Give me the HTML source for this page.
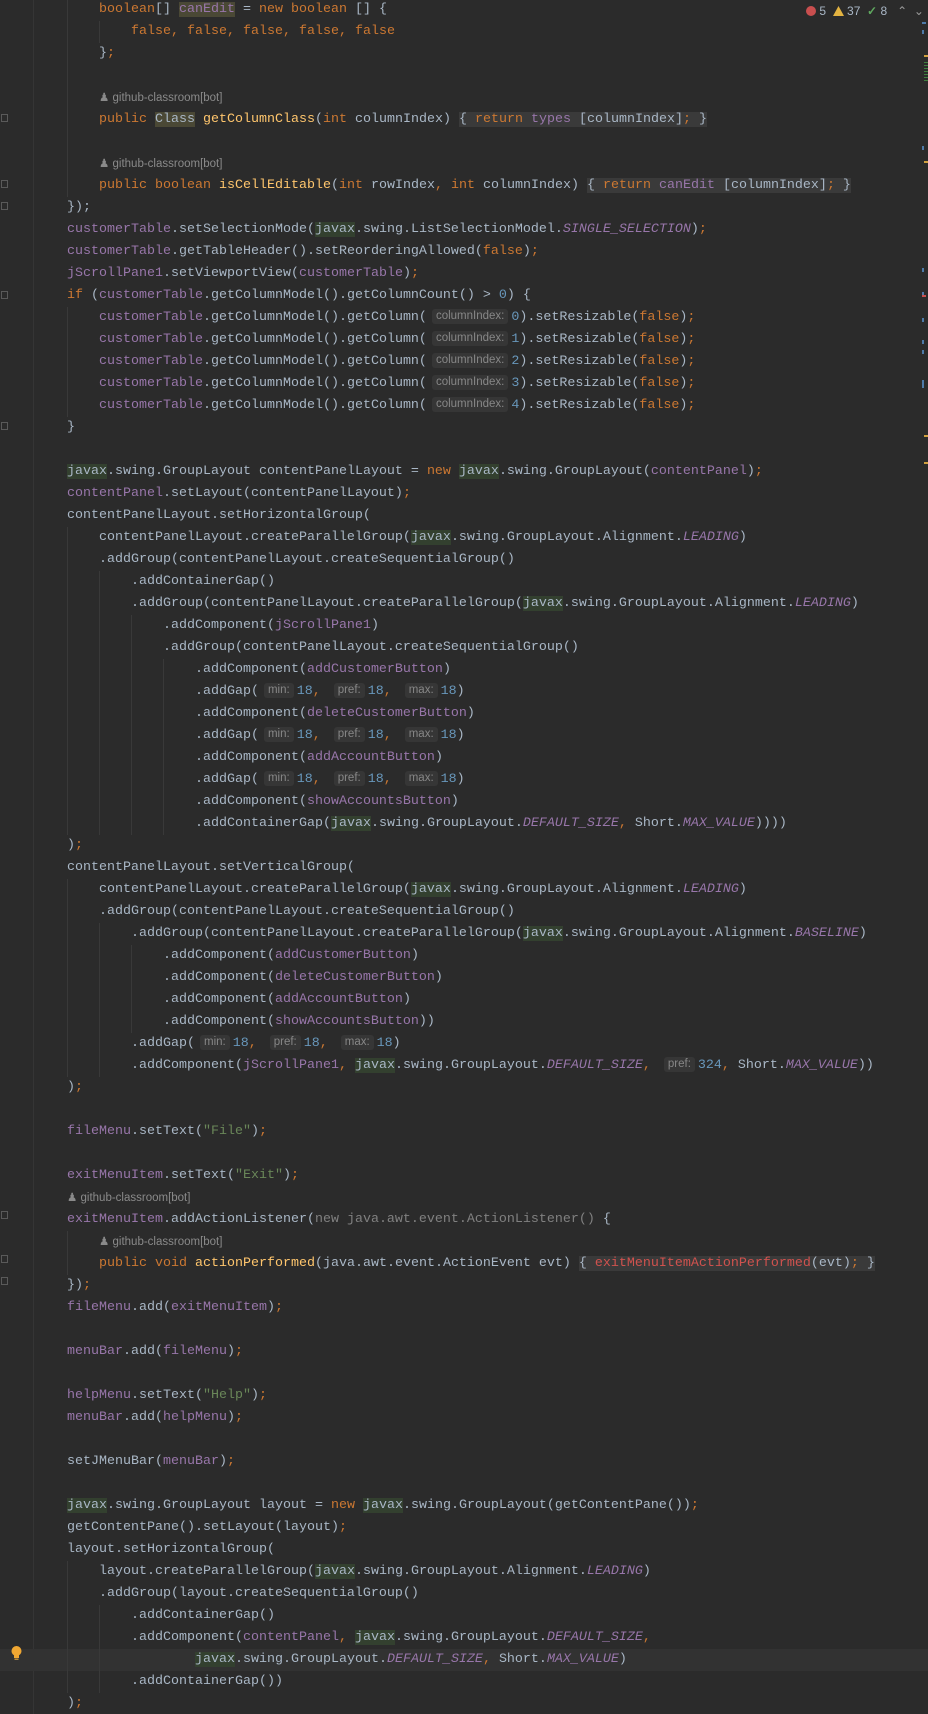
<!DOCTYPE html>
<html><head><meta charset="utf-8">
<style>
html,body{margin:0;padding:0;background:#2b2b2b;width:928px;height:1714px;overflow:hidden}
body{position:relative;font-family:"Liberation Mono",monospace;font-size:13.33px;color:#a9b7c6}
#code{position:absolute;top:-1px;left:0;width:928px}
.r{position:relative;height:22px;line-height:22px;white-space:pre;padding-left:67px;overflow:hidden}
.g{position:absolute;top:0;left:67px;height:22px;background:repeating-linear-gradient(to right,#393939 0 1px,transparent 1px 32px)}
.k{color:#cc7832}.f{color:#9876aa}.m{color:#ffc66d}.n{color:#6897bb}.s{color:#6a8759}
.c{color:#9876aa;font-style:italic}.d{color:#808080}.e{color:#d0524e}
.hl{background:#4a4835}.hj{background:#33402f}.fb{background:#3a3a3a}
.h{display:inline-block;font-family:"Liberation Sans",sans-serif;font-size:11.5px;line-height:15px;vertical-align:1px;color:#878787;background:#363636;border-radius:3px;padding:0 4px;margin:0 3px 0 5px}
.a{font-family:"Liberation Sans",sans-serif;font-size:11.5px;color:#8a8a8a}
.cur{background:#323232}
#gut{position:absolute;left:33px;top:0;width:1px;height:1714px;background:#353535}
.fold{position:absolute;left:1px;width:7px;height:8px;border:1px solid #5a5a5a;box-sizing:border-box}
</style></head><body>
<div id="gut"></div>
<div id="code">
<div class="r"><div class="g" style="width:32px"></div>    <span class="k">boolean</span>[] <span class="f hl">canEdit</span> = <span class="k">new boolean</span> [] {</div>
<div class="r"><div class="g" style="width:64px"></div>        <span class="k">false, false, false, false, false</span></div>
<div class="r"><div class="g" style="width:32px"></div>    }<span class="k">;</span></div>
<div class="r"><div class="g" style="width:32px"></div></div>
<div class="r"><div class="g" style="width:32px"></div>    <span class="a">&#9823; github-classroom[bot]</span></div>
<div class="r"><div class="g" style="width:32px"></div>    <span class="k">public </span><span class="hl">Class</span> <span class="m">getColumnClass</span>(<span class="k">int </span>columnIndex) <span class="fb">{ <span class="k">return </span><span class="f">types</span> [columnIndex]<span class="k">;</span> }</span></div>
<div class="r"><div class="g" style="width:32px"></div></div>
<div class="r"><div class="g" style="width:32px"></div>    <span class="a">&#9823; github-classroom[bot]</span></div>
<div class="r"><div class="g" style="width:32px"></div>    <span class="k">public boolean </span><span class="m">isCellEditable</span>(<span class="k">int </span>rowIndex<span class="k">, int </span>columnIndex) <span class="fb">{ <span class="k">return </span><span class="f">canEdit</span> [columnIndex]<span class="k">;</span> }</span></div>
<div class="r">});</div>
<div class="r"><span class="f">customerTable</span>.setSelectionMode(<span class="hj">javax</span>.swing.ListSelectionModel.<span class="c">SINGLE_SELECTION</span>)<span class="k">;</span></div>
<div class="r"><span class="f">customerTable</span>.getTableHeader().setReorderingAllowed(<span class="k">false</span>)<span class="k">;</span></div>
<div class="r"><span class="f">jScrollPane1</span>.setViewportView(<span class="f">customerTable</span>)<span class="k">;</span></div>
<div class="r"><span class="k">if </span>(<span class="f">customerTable</span>.getColumnModel().getColumnCount() &gt; <span class="n">0</span>) {</div>
<div class="r"><div class="g" style="width:32px"></div>    <span class="f">customerTable</span>.getColumnModel().getColumn(<span class="h">columnIndex:</span><span class="n">0</span>).setResizable(<span class="k">false</span>)<span class="k">;</span></div>
<div class="r"><div class="g" style="width:32px"></div>    <span class="f">customerTable</span>.getColumnModel().getColumn(<span class="h">columnIndex:</span><span class="n">1</span>).setResizable(<span class="k">false</span>)<span class="k">;</span></div>
<div class="r"><div class="g" style="width:32px"></div>    <span class="f">customerTable</span>.getColumnModel().getColumn(<span class="h">columnIndex:</span><span class="n">2</span>).setResizable(<span class="k">false</span>)<span class="k">;</span></div>
<div class="r"><div class="g" style="width:32px"></div>    <span class="f">customerTable</span>.getColumnModel().getColumn(<span class="h">columnIndex:</span><span class="n">3</span>).setResizable(<span class="k">false</span>)<span class="k">;</span></div>
<div class="r"><div class="g" style="width:32px"></div>    <span class="f">customerTable</span>.getColumnModel().getColumn(<span class="h">columnIndex:</span><span class="n">4</span>).setResizable(<span class="k">false</span>)<span class="k">;</span></div>
<div class="r">}</div>
<div class="r"></div>
<div class="r"><span class="hj">javax</span>.swing.GroupLayout contentPanelLayout = <span class="k">new </span><span class="hj">javax</span>.swing.GroupLayout(<span class="f">contentPanel</span>)<span class="k">;</span></div>
<div class="r"><span class="f">contentPanel</span>.setLayout(contentPanelLayout)<span class="k">;</span></div>
<div class="r">contentPanelLayout.setHorizontalGroup(</div>
<div class="r"><div class="g" style="width:32px"></div>    contentPanelLayout.createParallelGroup(<span class="hj">javax</span>.swing.GroupLayout.Alignment.<span class="c">LEADING</span>)</div>
<div class="r"><div class="g" style="width:32px"></div>    .addGroup(contentPanelLayout.createSequentialGroup()</div>
<div class="r"><div class="g" style="width:64px"></div>        .addContainerGap()</div>
<div class="r"><div class="g" style="width:64px"></div>        .addGroup(contentPanelLayout.createParallelGroup(<span class="hj">javax</span>.swing.GroupLayout.Alignment.<span class="c">LEADING</span>)</div>
<div class="r"><div class="g" style="width:96px"></div>            .addComponent(<span class="f">jScrollPane1</span>)</div>
<div class="r"><div class="g" style="width:96px"></div>            .addGroup(contentPanelLayout.createSequentialGroup()</div>
<div class="r"><div class="g" style="width:128px"></div>                .addComponent(<span class="f">addCustomerButton</span>)</div>
<div class="r"><div class="g" style="width:128px"></div>                .addGap(<span class="h">min:</span><span class="n">18</span><span class="k">, </span><span class="h">pref:</span><span class="n">18</span><span class="k">, </span><span class="h">max:</span><span class="n">18</span>)</div>
<div class="r"><div class="g" style="width:128px"></div>                .addComponent(<span class="f">deleteCustomerButton</span>)</div>
<div class="r"><div class="g" style="width:128px"></div>                .addGap(<span class="h">min:</span><span class="n">18</span><span class="k">, </span><span class="h">pref:</span><span class="n">18</span><span class="k">, </span><span class="h">max:</span><span class="n">18</span>)</div>
<div class="r"><div class="g" style="width:128px"></div>                .addComponent(<span class="f">addAccountButton</span>)</div>
<div class="r"><div class="g" style="width:128px"></div>                .addGap(<span class="h">min:</span><span class="n">18</span><span class="k">, </span><span class="h">pref:</span><span class="n">18</span><span class="k">, </span><span class="h">max:</span><span class="n">18</span>)</div>
<div class="r"><div class="g" style="width:128px"></div>                .addComponent(<span class="f">showAccountsButton</span>)</div>
<div class="r"><div class="g" style="width:128px"></div>                .addContainerGap(<span class="hj">javax</span>.swing.GroupLayout.<span class="c">DEFAULT_SIZE</span><span class="k">, </span>Short.<span class="c">MAX_VALUE</span>))))</div>
<div class="r">)<span class="k">;</span></div>
<div class="r">contentPanelLayout.setVerticalGroup(</div>
<div class="r"><div class="g" style="width:32px"></div>    contentPanelLayout.createParallelGroup(<span class="hj">javax</span>.swing.GroupLayout.Alignment.<span class="c">LEADING</span>)</div>
<div class="r"><div class="g" style="width:32px"></div>    .addGroup(contentPanelLayout.createSequentialGroup()</div>
<div class="r"><div class="g" style="width:64px"></div>        .addGroup(contentPanelLayout.createParallelGroup(<span class="hj">javax</span>.swing.GroupLayout.Alignment.<span class="c">BASELINE</span>)</div>
<div class="r"><div class="g" style="width:96px"></div>            .addComponent(<span class="f">addCustomerButton</span>)</div>
<div class="r"><div class="g" style="width:96px"></div>            .addComponent(<span class="f">deleteCustomerButton</span>)</div>
<div class="r"><div class="g" style="width:96px"></div>            .addComponent(<span class="f">addAccountButton</span>)</div>
<div class="r"><div class="g" style="width:96px"></div>            .addComponent(<span class="f">showAccountsButton</span>))</div>
<div class="r"><div class="g" style="width:64px"></div>        .addGap(<span class="h">min:</span><span class="n">18</span><span class="k">, </span><span class="h">pref:</span><span class="n">18</span><span class="k">, </span><span class="h">max:</span><span class="n">18</span>)</div>
<div class="r"><div class="g" style="width:64px"></div>        .addComponent(<span class="f">jScrollPane1</span><span class="k">, </span><span class="hj">javax</span>.swing.GroupLayout.<span class="c">DEFAULT_SIZE</span><span class="k">, </span><span class="h">pref:</span><span class="n">324</span><span class="k">, </span>Short.<span class="c">MAX_VALUE</span>))</div>
<div class="r">)<span class="k">;</span></div>
<div class="r"></div>
<div class="r"><span class="f">fileMenu</span>.setText(<span class="s">"File"</span>)<span class="k">;</span></div>
<div class="r"></div>
<div class="r"><span class="f">exitMenuItem</span>.setText(<span class="s">"Exit"</span>)<span class="k">;</span></div>
<div class="r"><span class="a">&#9823; github-classroom[bot]</span></div>
<div class="r"><span class="f">exitMenuItem</span>.addActionListener(<span class="d">new java.awt.event.ActionListener()</span> {</div>
<div class="r"><div class="g" style="width:32px"></div>    <span class="a">&#9823; github-classroom[bot]</span></div>
<div class="r"><div class="g" style="width:32px"></div>    <span class="k">public void </span><span class="m">actionPerformed</span>(java.awt.event.ActionEvent evt) <span class="fb">{ <span class="e">exitMenuItemActionPerformed</span>(evt)<span class="k">;</span> }</span></div>
<div class="r">})<span class="k">;</span></div>
<div class="r"><span class="f">fileMenu</span>.add(<span class="f">exitMenuItem</span>)<span class="k">;</span></div>
<div class="r"></div>
<div class="r"><span class="f">menuBar</span>.add(<span class="f">fileMenu</span>)<span class="k">;</span></div>
<div class="r"></div>
<div class="r"><span class="f">helpMenu</span>.setText(<span class="s">"Help"</span>)<span class="k">;</span></div>
<div class="r"><span class="f">menuBar</span>.add(<span class="f">helpMenu</span>)<span class="k">;</span></div>
<div class="r"></div>
<div class="r">setJMenuBar(<span class="f">menuBar</span>)<span class="k">;</span></div>
<div class="r"></div>
<div class="r"><span class="hj">javax</span>.swing.GroupLayout layout = <span class="k">new </span><span class="hj">javax</span>.swing.GroupLayout(getContentPane())<span class="k">;</span></div>
<div class="r">getContentPane().setLayout(layout)<span class="k">;</span></div>
<div class="r">layout.setHorizontalGroup(</div>
<div class="r"><div class="g" style="width:32px"></div>    layout.createParallelGroup(<span class="hj">javax</span>.swing.GroupLayout.Alignment.<span class="c">LEADING</span>)</div>
<div class="r"><div class="g" style="width:32px"></div>    .addGroup(layout.createSequentialGroup()</div>
<div class="r"><div class="g" style="width:64px"></div>        .addContainerGap()</div>
<div class="r"><div class="g" style="width:64px"></div>        .addComponent(<span class="f">contentPanel</span><span class="k">, </span><span class="hj">javax</span>.swing.GroupLayout.<span class="c">DEFAULT_SIZE</span><span class="k">,</span></div>
<div class="r cur"><div class="g" style="width:64px"></div>                <span class="hj">javax</span>.swing.GroupLayout.<span class="c">DEFAULT_SIZE</span><span class="k">, </span>Short.<span class="c">MAX_VALUE</span>)</div>
<div class="r"><div class="g" style="width:64px"></div>        .addContainerGap())</div>
<div class="r">)<span class="k">;</span></div>
</div>
<div class="fold" style="top:114px"></div>
<div class="fold" style="top:180px"></div>
<div class="fold" style="top:202px"></div>
<div class="fold" style="top:291px"></div>
<div class="fold" style="top:422px"></div>
<div class="fold" style="top:1211px"></div>
<div class="fold" style="top:1255px"></div>
<div class="fold" style="top:1277px"></div>
<svg style="position:absolute;left:10px;top:1645px" width="13" height="16" viewBox="0 0 13 16"><circle cx="6.5" cy="6" r="5" fill="#f0a732"/><rect x="4" y="10" width="5" height="3" fill="#f0a732"/><rect x="4.5" y="13.5" width="4" height="1.5" fill="#b88a3a"/></svg>
<div style="position:absolute;top:3px;left:806px;font-family:'Liberation Sans',sans-serif;font-size:12px;color:#a9b7c6;white-space:nowrap;line-height:16px">
<span style="display:inline-block;width:10px;height:10px;border-radius:50%;background:#c94f4f;vertical-align:-1px"></span> 5&nbsp;
<svg width="11" height="10" style="vertical-align:-1px"><polygon points="5.5,0 11,10 0,10" fill="#e3b341"/></svg> 37&nbsp;
<span style="color:#5fa85f;font-weight:bold">&#10003;</span> 8&nbsp;&nbsp; <span style="color:#9a9a9a">&#8963;</span>&nbsp;&nbsp;<span style="color:#9a9a9a">&#8964;</span>
</div>
<div style="position:absolute;left:922px;top:22px;width:4px;height:2px;background:#4e7aa8"></div>
<div style="position:absolute;left:922px;top:30px;width:2px;height:4px;background:#4e7aa8"></div>
<div style="position:absolute;left:924px;top:55px;width:4px;height:2px;background:#d0a040"></div>
<div style="position:absolute;left:924px;top:62px;width:4px;height:20px;background:repeating-linear-gradient(#3f7f3f 0 1px,transparent 1px 3px)"></div>
<div style="position:absolute;left:922px;top:146px;width:2px;height:4px;background:#4e7aa8"></div>
<div style="position:absolute;left:924px;top:161px;width:4px;height:2px;background:#d0a040"></div>
<div style="position:absolute;left:922px;top:268px;width:2px;height:4px;background:#4e7aa8"></div>
<div style="position:absolute;left:922px;top:292px;width:2px;height:4px;background:#4e7aa8"></div>
<div style="position:absolute;left:922px;top:295px;width:4px;height:2px;background:#c94f4f"></div>
<div style="position:absolute;left:922px;top:318px;width:2px;height:4px;background:#4e7aa8"></div>
<div style="position:absolute;left:922px;top:340px;width:2px;height:4px;background:#4e7aa8"></div>
<div style="position:absolute;left:922px;top:350px;width:2px;height:4px;background:#4e7aa8"></div>
<div style="position:absolute;left:922px;top:380px;width:2px;height:8px;background:#4e7aa8"></div>
<div style="position:absolute;left:924px;top:435px;width:4px;height:2px;background:#d0a040"></div>
<div style="position:absolute;left:924px;top:462px;width:4px;height:2px;background:#d0a040"></div>
</body></html>
